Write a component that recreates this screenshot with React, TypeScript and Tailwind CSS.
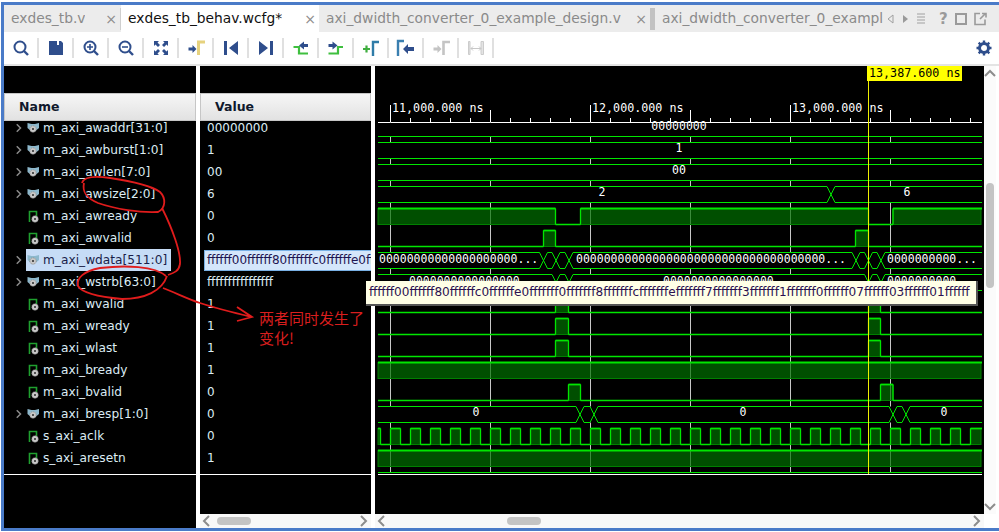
import type { ReactNode } from 'react';

const NAVY = '#2f4e8c';
const GREEN = '#00e600';
const WDATA =
  'ffffff00ffffff80ffffffc0ffffffe0fffffff0fffffff8fffffffcfffffffefffffff7fffffff3fffffff1fffffff0ffffff07ffffff03ffffff01ffffff';

type Row = { name: string; value: string; bus?: boolean; selected?: boolean };

const rows: Row[] = [
  { name: 'm_axi_awaddr[31:0]', value: '00000000', bus: true },
  { name: 'm_axi_awburst[1:0]', value: '1', bus: true },
  { name: 'm_axi_awlen[7:0]', value: '00', bus: true },
  { name: 'm_axi_awsize[2:0]', value: '6', bus: true },
  { name: 'm_axi_awready', value: '0' },
  { name: 'm_axi_awvalid', value: '0' },
  { name: 'm_axi_wdata[511:0]', value: WDATA, bus: true, selected: true },
  { name: 'm_axi_wstrb[63:0]', value: 'ffffffffffffffff', bus: true },
  { name: 'm_axi_wvalid', value: '1' },
  { name: 'm_axi_wready', value: '1' },
  { name: 'm_axi_wlast', value: '1' },
  { name: 'm_axi_bready', value: '1' },
  { name: 'm_axi_bvalid', value: '0' },
  { name: 'm_axi_bresp[1:0]', value: '0', bus: true },
  { name: 's_axi_aclk', value: '0' },
  { name: 's_axi_aresetn', value: '1' },
];

// toolbar icons, drawn in a 22x22 box
const toolbarIcons: ReactNode[] = [
  <>
    <circle cx="10" cy="10" r="5.5" fill="none" stroke={NAVY} strokeWidth="2" />
    <path d="M14 14l4 4" stroke={NAVY} strokeWidth="2.4" />
  </>,
  <path d="M4 4h8v4h2V4h2l2 2v12H4z" fill={NAVY} />,
  <>
    <circle cx="10" cy="10" r="5.5" fill="none" stroke={NAVY} strokeWidth="2" />
    <path d="M14 14l4 4" stroke={NAVY} strokeWidth="2.4" />
    <path d="M7 10h6M10 7v6" stroke={NAVY} strokeWidth="1.6" />
  </>,
  <>
    <circle cx="10" cy="10" r="5.5" fill="none" stroke={NAVY} strokeWidth="2" />
    <path d="M14 14l4 4" stroke={NAVY} strokeWidth="2.4" />
    <path d="M7 10h6" stroke={NAVY} strokeWidth="1.6" />
  </>,
  <path d="M4 4h5L7.500 5.500 10 8 8 10 5.500 7.500 4 9zM18 4v5l-1.500-1.500L14 10l-2-2 2.500-2.500L13 4zM4 18v-5l1.500 1.500L8 12l2 2-2.500 2.500L9 18zM18 18h-5l1.500-1.500L12 14l2-2 2.500 2.500L18 13z" fill={NAVY} />,
  <>
    <path d="M3.500 10.500h4V8l4 4-4 4v-2.500h-4z" fill={NAVY} />
    <path d="M13.500 18V5H20" fill="none" stroke="#e6d27e" strokeWidth="3" />
  </>,
  <path d="M4 4h3v14H4zM18 4v14l-9-7z" fill={NAVY} />,
  <path d="M15 4h3v14h-3zM4 4v14l9-7z" fill={NAVY} />,
  <>
    <path d="M3.500 10H9v6.500h9" fill="none" stroke="#3fbf3f" strokeWidth="2.200" />
    <path d="M18 7h-4V4.500l-5 4 5 4V10h4z" fill={NAVY} />
  </>,
  <>
    <path d="M3.500 16.500H13V10h5" fill="none" stroke="#3fbf3f" strokeWidth="2.200" />
    <path d="M3.500 7h4V4.500l5 4-5 4V10h-4z" fill={NAVY} />
  </>,
  <>
    <path d="M3 12h7M6.500 8.500v7" stroke="#3fae3f" strokeWidth="2.200" />
    <path d="M13 19V5h6" fill="none" stroke="#2f7ca8" strokeWidth="2.400" />
  </>,
  <>
    <path d="M3 19V4h6" fill="none" stroke="#3a7fb0" strokeWidth="2.400" />
    <path d="M19 10h-6V7l-5 5 5 5v-3h6z" fill={NAVY} />
  </>,
  <>
    <path d="M3.500 10.500h4V8l4 4-4 4v-2.500h-4z" fill="#c4c4c4" />
    <path d="M13.500 18V5H20" fill="none" stroke="#c4c4c4" strokeWidth="2.600" />
  </>,
  <>
    <path d="M3.500 4.500h1.500v13H3.500zM16 4.500h2.500v13H16z" fill="#e4e4e4" stroke="#cccccc" />
    <path d="M6 11.500h10M8 9.500l-2 2 2 2M14 9.500l2 2-2 2" fill="none" stroke="#c8c8c8" />
  </>,
];

function Chevron({ dir, className, color = '#8c8c8c' }: { dir: 'left' | 'right' | 'up' | 'down'; className?: string; color?: string }) {
  const d = {
    left: 'M7 1L2 6l5 5',
    right: 'M3 1l5 5-5 5',
    up: 'M1 8l5-5 5 5',
    down: 'M1 3l5 5 5-5',
  }[dir];
  return (
    <svg width="12" height="12" viewBox="0 0 12 12" className={className}>
      <path d={d} fill="none" stroke={color} strokeWidth="2" />
    </svg>
  );
}

function Gear({ cx, cy }: { cx: number; cy: number }) {
  return (
    <>
      <circle cx={cx} cy={cy} r="3.200" fill="#c8c8c8" stroke="#8a8a8a" strokeWidth="0.800" strokeDasharray="1.400 0.700" />
      <circle cx={cx} cy={cy} r="1" fill="#2a2a2a" />
    </>
  );
}

function SignalIcon({ bus }: { bus?: boolean }) {
  return (
    <svg width="14" height="14" viewBox="0 0 14 14" className="shrink-0">
      {bus ? (
        <>
          <path d="M0.500 2l4 1h3.500l4-1v5l-3 2.500H3.500L0.500 7z" fill="#8db8cc" />
          <Gear cx={6} cy={8} />
        </>
      ) : (
        <>
          <path d="M2.500 13V2.500H9.500V7" fill="none" stroke="#1fa02f" strokeWidth="1.600" />
          <Gear cx={8} cy={10} />
        </>
      )}
    </svg>
  );
}

function Tab({ label, width, active, close = true, textWidth }: { label: string; width: string; active?: boolean; close?: boolean; textWidth?: string }) {
  return (
    <div className={`flex h-full shrink-0 items-center ${width} ${active ? 'bg-white text-[#111111]' : 'text-[#8a8a8a]'}`}>
      <span className={`overflow-hidden whitespace-nowrap pl-[7px] ${textWidth ?? ''}`}>{label}</span>
      {close && <span className="ml-auto mr-[3px] text-[14px] leading-none text-[#8c8c8c]">×</span>}
    </div>
  );
}

function ColumnHeader({ label, pad }: { label: string; pad: string }) {
  return (
    <div className={`flex h-[28px] shrink-0 items-center border border-[#c6c6c6] bg-gradient-to-b from-[#f6f6f6] to-[#e2e2e2] pt-[1px] text-[12.5px] font-bold text-[#10182c] ${pad}`}>
      {label}
    </div>
  );
}

function NamePanel() {
  return (
    <div className="flex h-full w-[192px] shrink-0 flex-col bg-black">
      <div className="h-[27px] shrink-0" />
      <ColumnHeader label="Name" pad="pl-[14px]" />
      <div className="h-[353px] shrink-0 overflow-hidden">
        <div className="-mt-[4px]">
          {rows.map((row) => (
            <div key={row.name} className="flex h-[22px] items-center">
              <div className="flex w-[22px] shrink-0 justify-end pr-[1px]">
                {row.bus && <Chevron dir="right" color="#8a8a8a" className="scale-75" />}
              </div>
              <div className={`flex h-full w-[145px] items-center pl-[1px] text-[12.2px] ${row.selected ? 'bg-[#c6dcf6] text-[#1a1e4a]' : 'text-[#dcecf4]'}`}>
                <SignalIcon bus={row.bus} />
                <span className="ml-[2px] whitespace-nowrap">{row.name}</span>
              </div>
            </div>
          ))}
        </div>
      </div>
      <div className="h-[1px] shrink-0 bg-white" />
    </div>
  );
}

function ValuePanel() {
  return (
    <div className="flex h-full w-[171px] shrink-0 flex-col bg-black">
      <div className="h-[27px] shrink-0" />
      <ColumnHeader label="Value" pad="pl-[14px]" />
      <div className="h-[353px] shrink-0 overflow-hidden">
        <div className="-mt-[4px]">
          {rows.map((row) => (
            <div key={row.name} className="flex h-[22px] items-center overflow-hidden whitespace-nowrap text-[12px]">
              {row.selected ? (
                <div className="ml-[4px] flex h-[21px] w-[167px] shrink-0 items-center overflow-hidden border border-r-0 border-[#79b0e4] bg-[#d4e6fb] pl-[2px] text-[#1e1450]">
                  {row.value}
                </div>
              ) : (
                <span className="pl-[7px] text-[#dcecf4]">{row.value}</span>
              )}
            </div>
          ))}
        </div>
      </div>
      <div className="h-[1px] shrink-0 bg-white" />
      <div className="flex-1" />
      <HScroll thumb="ml-[3px] w-[34px]" />
    </div>
  );
}

function HScroll({ thumb }: { thumb: string }) {
  return (
    <div className="flex h-[14px] shrink-0 items-center bg-[#f8f8f8] pl-[2px] pr-[1px]">
      <Chevron dir="left" className="shrink-0" />
      <div className={`h-[8px] rounded-full bg-[#c4c4c4] ${thumb}`} />
      <Chevron dir="right" className="ml-auto shrink-0" />
    </div>
  );
}

// rows of the wave form, page coordinates
const X0 = 378;
const X1 = 982;
const XEND = 981;

function Bus({ top, crosses }: { top: number; crosses: number[] }) {
  const bot = top + 16;
  let a = `M${X0} ${top}`;
  let b = `M${X0} ${bot}`;
  let aTop = true;
  crosses.forEach((c) => {
    // the two rails swap at each crossing
    a += `H${c - 4}L${c + 4} ${aTop ? bot : top}`;
    b += `H${c - 4}L${c + 4} ${aTop ? top : bot}`;
    aTop = !aTop;
  });
  a += `H${X1}`;
  b += `H${X1}`;
  return (
    <g>
      <rect x={X0} y={top} width={X1 - X0} height={16} fill="#000" />
      <path d={a} fill="none" stroke={GREEN} strokeWidth="1" />
      <path d={b} fill="none" stroke={GREEN} strokeWidth="1" />
    </g>
  );
}

function Wire({ top, highs }: { top: number; highs: [number, number][] }) {
  const low = top + 16;
  const edges: string[] = [];
  let d = '';
  let from = X0;
  highs.forEach(([a, b]) => {
    if (a > from) d += `M${from} ${low}H${a}`;
    if (a > X0) edges.push(`M${a} ${low}V${top}`);
    if (b < XEND) edges.push(`M${b} ${top}V${low}`);
    from = b;
  });
  if (from < X1 && from < XEND) d += `M${from} ${low}H${X1}`;
  return (
    <g>
      {highs.map(([a, b]) => (
        <rect key={a} x={a} y={top} width={b - a} height={16} fill="#007000" fillOpacity="0.7" stroke="#008000" strokeWidth="1" />
      ))}
      <path d={d} fill="none" stroke={GREEN} strokeWidth="1.300" />
      <path d={edges.join('')} fill="none" stroke={GREEN} strokeWidth="1.300" />
      {highs.map(([a, b]) => (
        <path key={a} d={`M${a} ${top}H${b === XEND ? X1 : b}`} stroke={GREEN} strokeWidth="1.800" />
      ))}
    </g>
  );
}

function WaveLabel({ x, y, children, anchor = 'start', size = 11.5 }: { x: number; y: number; children: string; anchor?: 'start' | 'middle'; size?: number }) {
  return (
    <text x={x} y={y} fill="#fff" fontSize={size} fontFamily="'DejaVu Sans Mono', monospace" textAnchor={anchor}>
      {children}
    </text>
  );
}

function Waves() {
  const minor: number[] = [];
  for (let x = 390; x <= 970; x += 20) minor.push(x);
  const clock: [number, number][] = [[X0, 380.5]];
  for (let x = 390; x < 970; x += 20) clock.push([x + 0.5, x + 10.5]);
  clock.push([970.5, XEND]);

  return (
    <svg width="609" height="448" viewBox="375 66 609 448" className="block shrink-0 bg-black">
      {/* ruler */}
      <path d={`M${X0} 122.500H${X1}`} stroke="#fff" strokeWidth="1" />
      {minor.map((x) => {
        const k = (x - 390) / 20;
        const y = k % 10 === 0 ? 105 : k % 5 === 0 ? 110 : 118;
        return <path key={x} d={`M${x + 0.5} ${y}V122`} stroke="#fff" strokeWidth="1" />;
      })}
      <WaveLabel x={392} y={112} size={11.7}>11,000.000 ns</WaveLabel>
      <WaveLabel x={592} y={112} size={11.7}>12,000.000 ns</WaveLabel>
      <WaveLabel x={792} y={112} size={11.7}>13,000.000 ns</WaveLabel>

      {/* grid */}
      {[390, 490, 590, 690, 790, 890].map((x) => (
        <path key={x} d={`M${x + 0.5} 122V472`} stroke="#c8c8c8" strokeWidth="1" />
      ))}

      <rect x={X0} y={123} width={X1 - X0} height={13} fill="#000" />
      <path d={`M${X0} 136.500H${X1}`} stroke={GREEN} strokeWidth="1" />
      <Bus top={142.5} crosses={[]} />
      <Bus top={164.5} crosses={[]} />
      <Bus top={186.5} crosses={[831]} />
      <Wire top={208.5} highs={[[X0, 555.5], [580.5, 868.5], [893, XEND]]} />
      <Wire top={230.5} highs={[[543.5, 555.5], [855.5, 868.5]]} />
      <Bus top={252.5} crosses={[543.5, 556, 569, 856, 868.5, 881]} />
      <Bus top={274.5} crosses={[556, 569, 868.5, 881]} />
      <Wire top={296.5} highs={[[555.5, 568.5], [868.5, 880.5]]} />
      <Wire top={318.5} highs={[[555.5, 568.5], [868.5, 880.5]]} />
      <Wire top={340.5} highs={[[555.5, 568.5], [868.5, 880.5]]} />
      <Wire top={362.5} highs={[[X0, XEND]]} />
      <Wire top={384.5} highs={[[568.5, 580.5], [880.5, 893]]} />
      <Bus top={406.5} crosses={[580, 594, 893, 906]} />
      <Wire top={428.5} highs={clock} />
      <Wire top={450.5} highs={[[X0, XEND]]} />
      <path d={`M${X0} 472.500H${X1}`} stroke={GREEN} strokeWidth="1" />
      <path d={`M${X0} 474.500H${X1}`} stroke="#fff" strokeWidth="1" />

      <WaveLabel x={679} y={130} anchor="middle">00000000</WaveLabel>
      <WaveLabel x={679} y={152} anchor="middle">1</WaveLabel>
      <WaveLabel x={679} y={174} anchor="middle">00</WaveLabel>
      <WaveLabel x={602} y={196} anchor="middle">2</WaveLabel>
      <WaveLabel x={907} y={196} anchor="middle">6</WaveLabel>
      <WaveLabel x={379} y={263}>00000000000000000000...</WaveLabel>
      <WaveLabel x={576} y={263}>000000000000000000000000000000000000...</WaveLabel>
      <WaveLabel x={887} y={263}>0000000000...</WaveLabel>
      <WaveLabel x={409} y={285}>0000000000000000</WaveLabel>
      <WaveLabel x={663} y={285}>0000000000000000</WaveLabel>
      <WaveLabel x={887} y={285}>0000000000</WaveLabel>
      <WaveLabel x={476} y={416} anchor="middle">0</WaveLabel>
      <WaveLabel x={743} y={416} anchor="middle">0</WaveLabel>
      <WaveLabel x={944} y={416} anchor="middle">0</WaveLabel>

      {/* cursor */}
      <path d="M868.500 81V474" stroke="#f0f000" strokeWidth="1" />
      <rect x="867" y="66" width="95" height="15" fill="#ffff00" />
      <text x="869" y="77" fill="#000" fontSize="11.700" fontFamily="'DejaVu Sans Mono', monospace">13,387.600 ns</text>
    </svg>
  );
}

export default function App() {
  return (
    <div className="h-[532px] w-[999px] overflow-hidden bg-white pl-[1px] pt-[2px] font-['DejaVu_Sans',sans-serif]">
      <div className="relative flex h-[529px] w-[998px] flex-col border-b-[3px] border-l-[3px] border-t-[3px] border-[#4a7bc8]">
        {/* tabs */}
        <div className="flex h-[27px] shrink-0 items-center bg-[#ececec] text-[13.800px]">
          <Tab label="exdes_tb.v" width="w-[116px]" />
          <div className="h-[22px] w-[1px] shrink-0 bg-[#cfcfcf]" />
          <Tab label="exdes_tb_behav.wcfg*" width="w-[198px]" active />
          <Tab label="axi_dwidth_converter_0_example_design.v" width="w-[331px]" />
          <div className="h-[22px] w-[5px] shrink-0 bg-[#c2c2c2]" />
          <Tab label="axi_dwidth_converter_0_example_design" width="w-[228px]" close={false} textWidth="w-[228px]" />
          <div className="flex flex-1 items-center gap-[6px] pl-[3px] text-[#9a9a9a]">
            <svg width="110" height="18" viewBox="0 0 110 18">
              <path d="M7 5v8l-5-4z" fill="none" stroke="#a0a0a0" strokeWidth="1" />
              <path d="M17 5v8l5-4z" fill="#9a9a9a" />
              <path d="M31 4h8M31 7h8M31 10h8M31 13h8" stroke="#a0a0a0" strokeWidth="1.200" />
              <rect x="70" y="4" width="10" height="10" fill="none" stroke="#9a9a9a" strokeWidth="2" />
              <path d="M94 3.500h-5v11h10v-5M94 9l5-5M96 3.500h4v4" fill="none" stroke="#9a9a9a" strokeWidth="1.600" />
            </svg>
          </div>
          <span className="absolute left-[935px] top-[3px] text-[15px] font-bold text-[#9a9a9a]">?</span>
        </div>

        {/* toolbar */}
        <div className="flex h-[32px] shrink-0 items-center bg-white">
          {toolbarIcons.map((icon, i) => (
            <div key={i} className="flex h-[20px] w-[35px] items-center justify-center border-r-2 border-[#e0e0e0]">
              <svg width="22" height="22" viewBox="0 0 22 22">
                {icon}
              </svg>
            </div>
          ))}
          <svg width="16" height="16" viewBox="0 0 16 16" className="ml-auto mr-[7px]">
            <circle cx="8" cy="8" r="4.500" fill="none" stroke={NAVY} strokeWidth="3" />
            <path d="M8 0.500v3M8 12.500v3M0.500 8h3M12.500 8h3M2.700 2.700l2.100 2.100M11.200 11.200l2.100 2.100M2.700 13.300l2.100-2.100M11.200 4.800l2.100-2.100" stroke={NAVY} strokeWidth="2.400" />
          </svg>
        </div>
        <div className="h-[2px] shrink-0 bg-[#e4e4e4]" />

        {/* panels */}
        <div className="flex h-[462px] shrink-0">
          <NamePanel />
          <div className="w-[4px] shrink-0 bg-white" />
          <ValuePanel />
          <div className="w-[4px] shrink-0 bg-white" />
          <div className="flex w-[609px] shrink-0 flex-col">
            <Waves />
            <HScroll thumb="ml-[118px] w-[34px]" />
          </div>
          <div className="flex h-[448px] w-[12px] shrink-0 flex-col items-center bg-[#fbfbfb]">
            <Chevron dir="up" className="mt-[2px]" />
            <div className="mt-[103px] h-[105px] w-[8px] rounded-full bg-[#c4c4c4]" />
            <Chevron dir="down" className="mt-auto mb-[1px]" />
          </div>
        </div>

        {/* hover tooltip */}
        <div className="absolute left-[362px] top-[276px] flex h-[25px] w-[612px] items-center overflow-hidden whitespace-nowrap border-b-2 border-r-2 border-[#555555] bg-[#ffffe6] pl-[3px] text-[12.100px] text-[#2a1050]">
          {WDATA}
        </div>

        {/* hand drawn notes */}
        <svg width="260" height="170" viewBox="70 170 260 170" className="pointer-events-none absolute left-[66px] top-[165px]">
          <path
            d="M82 183C84 176 96 176 110 178C130 181 150 185 160 192C166 198 166 208 158 212C140 213 115 209 98 203C86 198 82 192 84 183"
            fill="none"
            stroke="#e01c1c"
            strokeWidth="1.800"
          />
          <path d="M162 208C172 228 181 252 180 264C179 271 174 273 168 275" fill="none" stroke="#e01c1c" strokeWidth="1.800" />
          <path
            d="M166 276C155 266 125 265 100 268C84 271 76 278 78 286C82 293 100 297 122 299C145 299 162 291 167 276"
            fill="none"
            stroke="#e01c1c"
            strokeWidth="1.800"
          />
          <path d="M163 288C178 294 190 300 200 303C215 308 235 313 252 317M237 307L252 317L237 321" fill="none" stroke="#e01c1c" strokeWidth="1.800" />
        </svg>
        <div className="absolute left-[255px] top-[303px] w-[110px] font-['Noto_Sans_CJK_SC',sans-serif] text-[15px] leading-[20px] text-[#d81e1e]">
          两者同时发生了
          <br />
          变化!
        </div>
      </div>
    </div>
  );
}
